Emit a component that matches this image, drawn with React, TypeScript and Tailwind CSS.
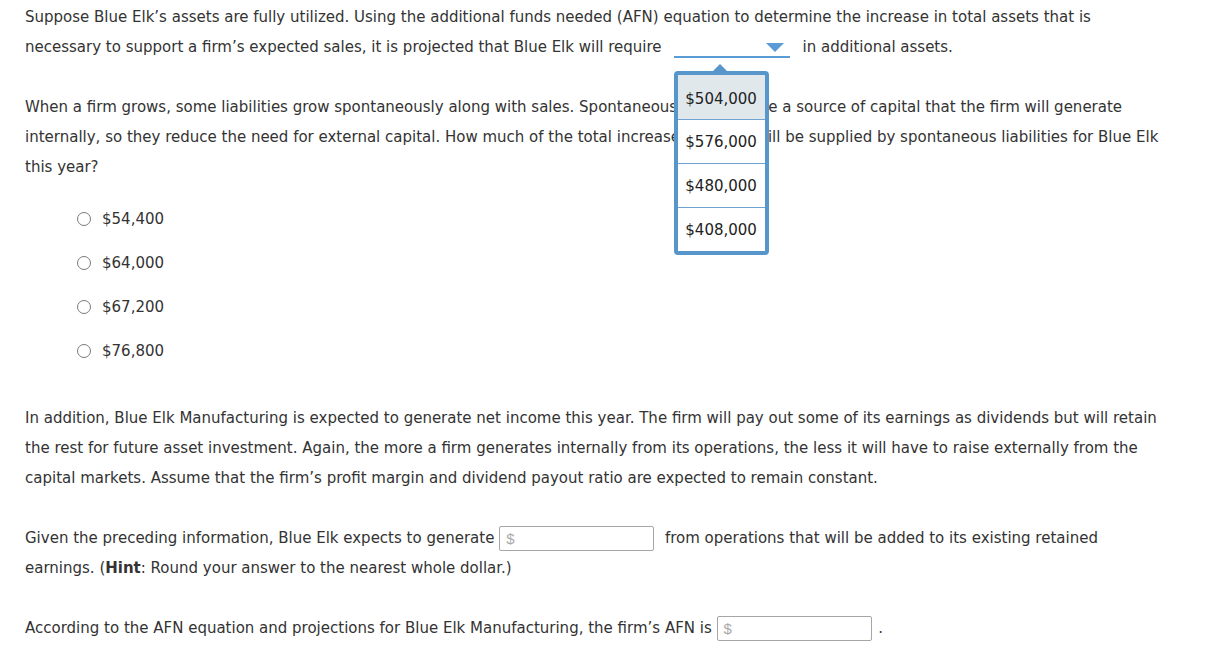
import React from 'react'

const options = ['$504,000', '$576,000', '$480,000', '$408,000']
const radios = ['$54,400', '$64,000', '$67,200', '$76,800']

function DollarInput() {
  return (
    <span className="inline-flex items-center w-[155px] h-[25px] border border-[#a6a6a6] rounded-[2px] align-middle pl-[6px] bg-white">
      <span className="text-[#a9a9a9] font-['Liberation_Sans',Arial,sans-serif] text-[15px] leading-none">$</span>
    </span>
  )
}

function Dropdown() {
  return (
    <span className="relative inline-block w-[116px] h-[20px] border-b-2 border-[#5b9bd5] align-[-6px] ml-[12px] mr-[13px]">
      <svg className="absolute right-[6px] top-[5px]" width="18" height="9" viewBox="0 0 18 9">
        <polygon points="0,0 18,0 9,9" fill="#5b9bd5" />
      </svg>
      <span className="absolute left-0 top-[33px] z-10 w-[95px]">
        <svg className="absolute left-[38px] top-[-7px]" width="16" height="8" viewBox="0 0 16 8">
          <polygon points="0,8 8,0 16,8" fill="#5696cb" />
        </svg>
        <span className="block border-4 border-[#5696cb] rounded-[4px] bg-white overflow-hidden">
          {options.map((o, i) => (
            <span
              key={o}
              className={`flex items-center justify-center h-[44px] text-[#222] ${i === 0 ? 'bg-[#e0e8ec] pt-[3px]' : 'border-t border-[#6fa3d2]'}`}
            >
              {o}
            </span>
          ))}
        </span>
      </span>
    </span>
  )
}

export default function App() {
  return (
    <div className="min-h-screen bg-white text-[#333] text-[15px] leading-[30px] font-['DejaVu_Sans',Verdana,sans-serif] px-[25px] pt-[2px] whitespace-nowrap">
      <p>
        Suppose Blue Elk’s assets are fully utilized. Using the additional funds needed (AFN) equation to determine the increase in total assets that is
        <br />
        necessary to support a firm’s expected sales, it is projected that Blue Elk will require
        <Dropdown />
        in additional assets.
      </p>

      <p className="mt-[30px]">
        When a firm grows, some liabilities grow spontaneously along with sales. Spontaneous liabilities are a source of capital that the firm will generate
        <br />
        internally, so they reduce the need for external capital. How much of the total increase in assets will be supplied by spontaneous liabilities for Blue Elk
        <br />
        this year?
      </p>

      <div className="mt-[15px] pl-[52px]">
        {radios.map((r) => (
          <div key={r} className="flex items-center h-[44px]">
            <span className="w-[14px] h-[14px] rounded-full border border-[#7a7a7a] mr-[11px]" />
            <span>{r}</span>
          </div>
        ))}
      </div>

      <p className="mt-[30px]">
        In addition, Blue Elk Manufacturing is expected to generate net income this year. The firm will pay out some of its earnings as dividends but will retain
        <br />
        the rest for future asset investment. Again, the more a firm generates internally from its operations, the less it will have to raise externally from the
        <br />
        capital markets. Assume that the firm’s profit margin and dividend payout ratio are expected to remain constant.
      </p>

      <p className="mt-[30px]">
        Given the preceding information, Blue Elk expects to generate <DollarInput /> <span className="ml-[6px]">from operations that will be added to its existing retained</span>
        <br />
        earnings. (<b>Hint</b>: Round your answer to the nearest whole dollar.)
      </p>

      <p className="mt-[30px]">
        According to the AFN equation and projections for Blue Elk Manufacturing, the firm’s AFN is <DollarInput /> <span className="ml-[2px]">.</span>
      </p>
    </div>
  )
}
